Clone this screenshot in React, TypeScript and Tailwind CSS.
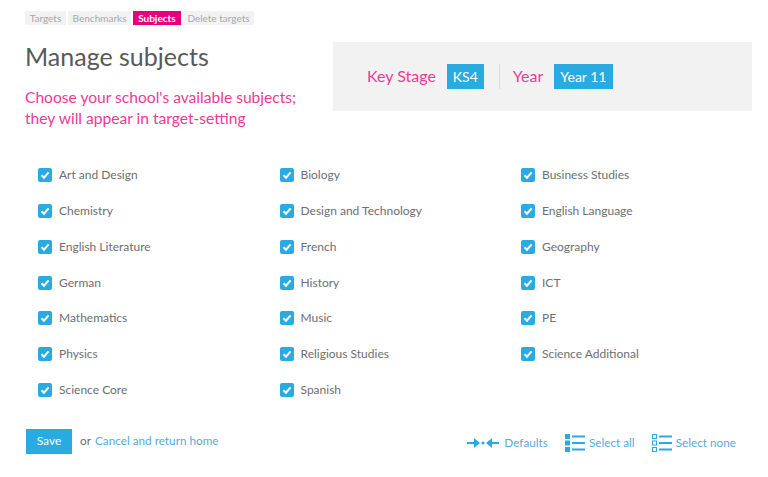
const subjects = [
  "Art and Design", "Biology", "Business Studies",
  "Chemistry", "Design and Technology", "English Language",
  "English Literature", "French", "Geography",
  "German", "History", "ICT",
  "Mathematics", "Music", "PE",
  "Physics", "Religious Studies", "Science Additional",
  "Science Core", "Spanish",
]

const tabs = ["Targets", "Benchmarks", "Subjects", "Delete targets"]

function Tick() {
  return (
    <span className="flex h-[14px] w-[14px] items-center justify-center rounded-[2px] bg-[#29abe2]">
      <svg width="10" height="10" viewBox="0 0 10 10" fill="none">
        <path d="M1.5 5.2 L4 7.7 L8.6 2.4" stroke="#fff" strokeWidth="2" />
      </svg>
    </span>
  )
}

function DefaultsIcon() {
  return (
    <svg width="32" height="12" viewBox="0 0 32 12" fill="#29abe2">
      <rect x="0" y="5" width="9" height="2" />
      <path d="M7 1 L13 6 L7 11 Z" />
      <circle cx="16" cy="6" r="1.6" />
      <path d="M25 1 L19 6 L25 11 Z" />
      <rect x="23" y="5" width="9" height="2" />
    </svg>
  )
}

function ListIcon({ filled }: { filled: boolean }) {
  const ys = [0, 6.5, 13]
  return (
    <svg width="20" height="18" viewBox="0 0 20 18" fill="none">
      {ys.map((y) => (
        <g key={y}>
          {filled ? (
            <rect x="0" y={y} width="5" height="5" fill="#29abe2" />
          ) : (
            <rect x="0.5" y={y + 0.5} width="4" height="4" stroke="#29abe2" />
          )}
          <rect x="7" y={y + 1.5} width="13" height="2" fill="#29abe2" />
        </g>
      ))}
    </svg>
  )
}

export default function App() {
  return (
    <div className="h-[477px] w-[768px] overflow-hidden bg-white pl-[25px] pr-4 pt-[11px] font-['Lato',sans-serif] text-[#6d6e71]">
      {/* Tabs */}
      <div className="flex gap-[2px] text-[10px] leading-[14px]">
        {tabs.map((t) =>
          t === "Subjects" ? (
            <span key={t} className="bg-[#e6007e] px-[5px] font-bold text-white">{t}</span>
          ) : (
            <span key={t} className="bg-[#f2f2f2] px-[4.7px] text-[#a7a9ac]">{t}</span>
          ),
        )}
      </div>

      {/* Header */}
      <div className="flex items-start justify-between">
        <div>
          <h1 className="mt-[15px] text-[25px] leading-[32px] text-[#58595b]">Manage subjects</h1>
          <p className="mt-[15px] text-[15.6px] leading-[21px] text-[#ee3a97]">
            Choose your school's available subjects;
            <br />
            they will appear in target-setting
          </p>
        </div>
        <div className="mt-[17px] flex h-[69px] w-[419px] items-center bg-[#f2f2f2] pl-[34px]">
          <span className="-mt-[2px] text-[16px] text-[#ee3a97]">Key Stage</span>
          <span className="ml-[11px] bg-[#29abe2] px-[6px] text-[14px] leading-[25px] text-white">KS4</span>
          <span className="ml-[15px] h-[25px] w-px bg-[#d9d9d9]" />
          <span className="-mt-[2px] ml-[13px] text-[16px] text-[#ee3a97]">Year</span>
          <span className="ml-[11px] bg-[#29abe2] px-[6px] text-[14px] leading-[25px] text-white">Year 11</span>
        </div>
      </div>

      {/* Subject checkboxes */}
      <div className="mt-[28.3px] grid grid-cols-[241.5px_241.5px_241.5px] pl-[13px] text-[12px]">
        {subjects.map((s) => (
          <label key={s} className="flex h-[35.8px] items-center gap-[7px]">
            <Tick />
            <span>{s}</span>
          </label>
        ))}
      </div>

      {/* Footer */}
      <div className="mt-[20.7px] flex items-center justify-between pr-[16px] text-[11.75px]">
        <div className="flex items-center pl-px">
          <button className="h-[25px] w-[46px] bg-[#29abe2] text-center text-[12px] text-white">Save</button>
          <span className="ml-[8px]">or</span>
          <a href="#" className="ml-[4px] text-[#5aa9dc]">Cancel and return home</a>
        </div>
        <div className="mt-[4px] flex items-center text-[#5aa9dc]">
          <DefaultsIcon />
          <span className="ml-[5px]">Defaults</span>
          <span className="ml-[17px]"><ListIcon filled /></span>
          <span className="ml-[4px]">Select all</span>
          <span className="ml-[17px]"><ListIcon filled={false} /></span>
          <span className="ml-[4px]">Select none</span>
        </div>
      </div>
    </div>
  )
}
